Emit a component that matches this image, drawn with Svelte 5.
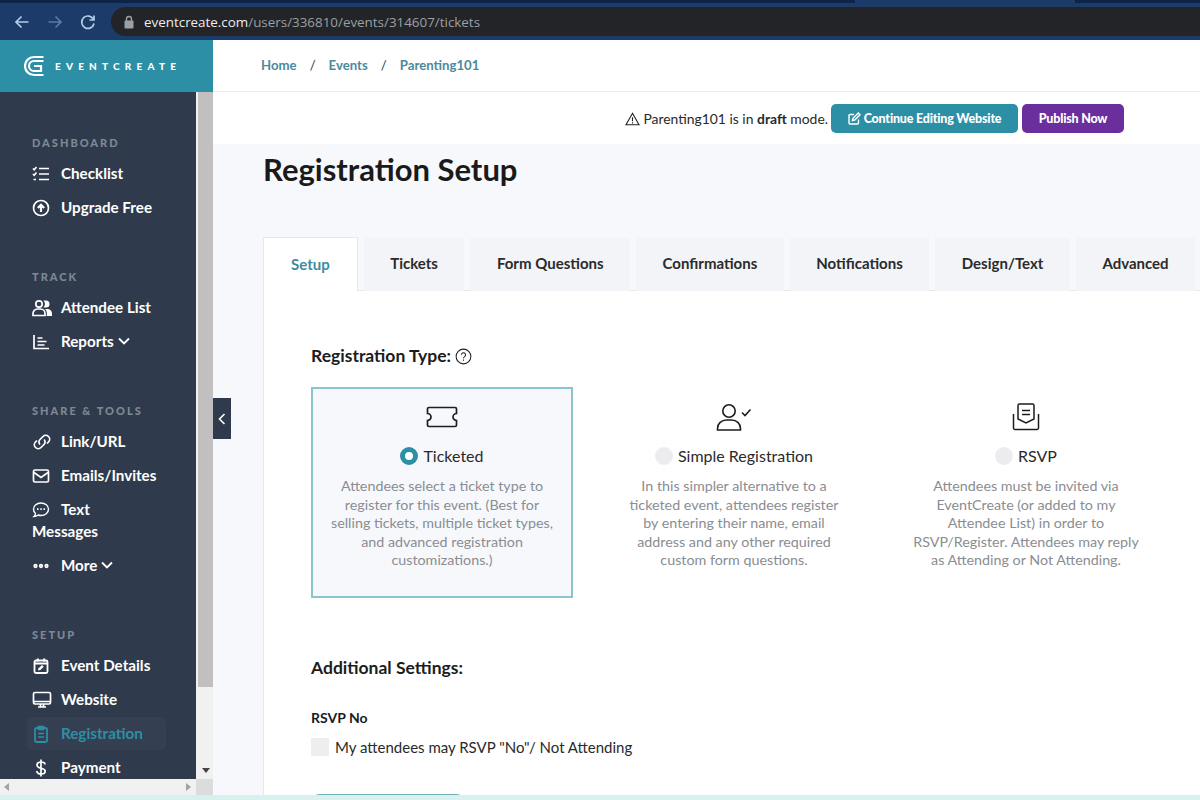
<script>
  const tabs = ['Setup', 'Tickets', 'Form Questions', 'Confirmations', 'Notifications', 'Design/Text', 'Advanced'];
  const options = [
    { name: 'Ticketed', on: true, desc: 'Attendees select a ticket type to register for this event. (Best for selling tickets, multiple ticket types, and advanced registration customizations.)' },
    { name: 'Simple Registration', on: false, desc: 'In this simpler alternative to a ticketed event, attendees register by entering their name, email address and any other required custom form questions.' },
    { name: 'RSVP', on: false, desc: 'Attendees must be invited via EventCreate (or added to my Attendee List) in order to RSVP/Register. Attendees may reply as Attending or Not Attending.' }
  ];
</script>

<div class="page">
  <header class="chrome">
    <div class="tabstrip"></div>
    <div class="toolbar">
      <svg class="nav" width="18" height="18" viewBox="0 0 18 18"><path d="M15.500 9H3M8.500 3.500 3 9l5.500 5.500" /></svg>
      <svg class="nav dim" width="18" height="18" viewBox="0 0 18 18"><path d="M2.500 9H15M9.500 3.500 15 9l-5.500 5.500" /></svg>
      <svg class="nav" width="18" height="18" viewBox="0 0 18 18"><path d="M14.500 6.500A6.200 6.200 0 1 0 15 10.500M15 2.500v4.500h-4.500" /></svg>
      <div class="omnibox">
        <svg width="12" height="14" viewBox="0 0 12 14"><rect x="1.500" y="5.500" width="9" height="8" rx="1" fill="#9aa0a6" /><path d="M3.500 6V4a2.500 2.500 0 0 1 5 0v2" fill="none" stroke="#9aa0a6" stroke-width="1.400" /></svg>
        <span class="url"><b>eventcreate.com</b>/users/336810/events/314607/tickets</span>
      </div>
    </div>
  </header>

  <div class="app">
    <aside class="side">
      <div class="logo">
        <svg width="20" height="22" viewBox="0 0 20 22" fill="none" stroke="#fff" stroke-width="2.200"><path d="M19.500 2H10a9 9 0 0 0 0 18h9.500" /><path d="M19.500 6H10a5 5 0 0 0 0 10h7V11h-7" /></svg>
        <span>EVENTCREATE</span>
      </div>
      <div class="side-body">
        <nav class="menu">
          <div class="sec">DASHBOARD</div>
          <a class="item"><svg viewBox="0 0 18 18"><path d="M7 3.500h10M7 9h10M7 14.500h10M1 3.500l1.200 1.200L4.500 2M1 9l1.200 1.200L4.500 7.500M1.500 14.500h2.500" /></svg>Checklist</a>
          <a class="item"><svg viewBox="0 0 18 18"><circle cx="9" cy="9" r="7.500" /><path d="M9 13V6M5.800 9 9 5.800 12.200 9" stroke-width="2.200" /></svg>Upgrade Free</a>

          <div class="sec gap">TRACK</div>
          <a class="item"><svg class="wide" viewBox="0 0 20 18"><circle cx="7" cy="5" r="3.200" /><path d="M1 16.500v-2A4.500 4.500 0 0 1 5.500 10h3a4.500 4.500 0 0 1 4.500 4.500v2z" /><path class="fill" d="M11.500 1.500h2.500a3.500 3.500 0 0 1 0 7h-2.500a5.500 5.500 0 0 0 0-7zM13 10h2.500a4.500 4.500 0 0 1 4.500 4.500v2.500h-5.500a7 7 0 0 0-1.500-7z" /></svg>Attendee List</a>
          <a class="item"><svg viewBox="0 0 18 18"><path d="M2 2v13.500h15M5.500 5h5M5.500 8.500h9M5.500 12h7" /></svg>Reports<svg class="chev" viewBox="0 0 12 8"><path d="M1 1.500 6 6.500l5-5" /></svg></a>

          <div class="sec gap">SHARE &amp; TOOLS</div>
          <a class="item"><svg class="wide" viewBox="0 0 20 18"><path d="M8 11.500a3.500 3.500 0 0 1 0-5l3-3a3.800 3.800 0 0 1 5.500 5.500l-1.500 1.500" /><path d="M12 6.500a3.500 3.500 0 0 1 0 5l-3 3A3.800 3.800 0 0 1 3.500 9L5 7.500" /></svg>Link/URL</a>
          <a class="item"><svg viewBox="0 0 18 18"><rect x="1.500" y="3" width="15" height="12" rx="1.500" /><path d="m2 5.500 7 5 7-5" /></svg>Emails/Invites</a>
          <a class="item"><svg viewBox="0 0 18 18"><path d="M9 2c4.200 0 7.500 2.700 7.500 6.200S13.200 14.500 9 14.500c-1 0-2-.2-2.800-.5-1 .8-2.500 1.500-4.200 1.500.8-.8 1.500-2 1.500-3A5.800 5.800 0 0 1 1.500 8.200C1.500 4.700 4.800 2 9 2z" stroke-width="1.400" /><path d="M5 8.200h1.500M8.300 8.200h1.500M11.500 8.200H13" /></svg>Text<br />Messages</a>
          <a class="item"><svg viewBox="0 0 18 18"><circle cx="3.500" cy="9" r="1.300" /><circle cx="9" cy="9" r="1.300" /><circle cx="14.500" cy="9" r="1.300" /></svg>More<svg class="chev" viewBox="0 0 12 8"><path d="M1 1.500 6 6.500l5-5" /></svg></a>

          <div class="sec gap">SETUP</div>
          <a class="item"><svg viewBox="0 0 18 18"><rect x="2.500" y="3.500" width="13" height="12.500" rx="1.500" stroke-width="1.800" /><path d="M2.500 6.500h13M5.800 1.500v3M12.200 1.500v3" stroke-width="2" /><path class="fill" d="m6 13.500.5-2.200 3.500-3.300 1.800 1.800-3.500 3.300z" /></svg>Event Details</a>
          <a class="item"><svg class="wide" viewBox="0 0 20 18"><rect x="1.500" y="1.500" width="17" height="11.500" rx="1.500" /><path d="M1.500 10.500h17M6 16h8M8.500 13v3M11.500 13v3" /></svg>Website</a>
          <a class="item current"><svg viewBox="0 0 18 18"><rect x="3" y="3" width="12" height="14" rx="1.500" stroke-width="1.800" /><path d="M6.500 1.500h5v3h-5zM6 8.500h6M6 12h6" stroke-width="1.600" /></svg>Registration</a>
          <a class="item"><svg viewBox="0 0 18 18"><path d="M13 5.500C13 3.800 11.200 3 9 3S5 4 5 6c0 4.500 8.200 2 8.200 6.300C13.200 14.300 11.200 15 9 15s-4.200-1-4.200-3M9 .5v17" /></svg>Payment</a>
        </nav>
        <div class="vbar">
          <div class="thumb"></div>
          <div class="track"><i></i></div>
        </div>
      </div>
      <div class="hbar">
        <div class="hrail"><i class="la"></i><i class="ra"></i></div>
        <div class="corner"></div>
      </div>
    </aside>

    <main class="main">
      <div class="crumbs">
        <a>Home</a><span>/</span><a>Events</a><span>/</span><a>Parenting101</a>
      </div>
      <div class="draft">
        <svg width="15" height="14" viewBox="0 0 15 14" fill="none" stroke="#222" stroke-width="1.100"><path d="M7.500 1.300 14 12.800H1zM7.500 5.200v4M7.500 10.200v1.200" /></svg>
        <span class="dtext">Parenting101 is in <b>draft</b> mode.</span>
        <button class="btn teal"><svg width="13" height="13" viewBox="0 0 13 13" fill="none" stroke="#fff" stroke-width="1.400"><path d="M10.500 7.500V11a1 1 0 0 1-1 1H2a1 1 0 0 1-1-1V3.500a1 1 0 0 1 1-1h4" /><path d="M4.500 8.500 5 6.300 10.300 1l1.700 1.700L6.700 8z" /></svg>Continue Editing Website</button>
        <button class="btn purple">Publish Now</button>
      </div>

      <div class="content">
        <h1>Registration Setup</h1>
        <div class="tabs">
          {#each tabs as t, i}
            <div class="tab" class:active={i === 0}>{t}</div>
          {/each}
        </div>
        <section class="panel">
          <h2>Registration Type: <svg class="help" width="17" height="17" viewBox="0 0 18 18" fill="none" stroke="#222" stroke-width="1.100"><circle cx="9" cy="9" r="7.800" /><path d="M6.800 7.200a2.200 2.200 0 1 1 3.400 1.900c-.8.500-1.200.9-1.200 1.800M9 12.300v1.200" /></svg></h2>
          <div class="cards">
            {#each options as o, i}
              <div class="card" class:on={o.on}>
                <div class="cicon">
                  {#if i === 0}
                    <svg width="32" height="22" viewBox="0 0 32 22" fill="none" stroke="#1d1d1d" stroke-width="1.700"><path d="M3 1.500h26a1.500 1.500 0 0 1 1.500 1.500v4.500a3.500 3.500 0 0 0 0 7V19a1.500 1.500 0 0 1-1.500 1.500H3A1.500 1.500 0 0 1 1.500 19v-4.500a3.500 3.500 0 0 0 0-7V3A1.500 1.500 0 0 1 3 1.500z" /></svg>
                  {:else if i === 1}
                    <svg width="36" height="28" viewBox="0 0 36 28" fill="none" stroke="#1d1d1d" stroke-width="1.600"><circle cx="13" cy="8" r="6.200" /><path d="M1.500 27v-1.500c0-5 4-8.500 9-8.500h5c5 0 9 3.500 9 8.500V27z" /><path d="m26 9.500 3 3 5.500-6" /></svg>
                  {:else}
                    <svg width="28" height="28" viewBox="0 0 28 28" fill="none" stroke="#1d1d1d" stroke-width="1.500"><path d="M6 12V2.500A1.500 1.500 0 0 1 7.500 1h13A1.500 1.500 0 0 1 22 2.500V16l-8 4-8-4zM10 7.500h8M10 11.500h8" /><path d="M1.500 11v14a1.500 1.500 0 0 0 1.500 1.500h22a1.500 1.500 0 0 0 1.500-1.500V11" /></svg>
                  {/if}
                </div>
                <div class="opt"><span class="radio" class:sel={o.on}></span>{o.name}</div>
                <p>{o.desc}</p>
              </div>
            {/each}
          </div>
          <h2 class="more">Additional Settings:</h2>
          <h3>RSVP No</h3>
          <div class="check"><span class="box"></span>My attendees may RSVP "No"/ Not Attending</div>
          <div class="save"></div>
        </section>
      </div>
    </main>

    <button class="toggle" aria-label="Collapse"><svg width="8" height="12" viewBox="0 0 8 12" fill="none" stroke="#fff" stroke-width="1.600"><path d="M6.500 1 1.500 6l5 5" /></svg></button>
  </div>
  <div class="strip"></div>
</div>

<style>
  :global(body) { margin: 0; }
  .page { width: 1200px; height: 800px; overflow: hidden; display: flex; flex-direction: column; font-family: Lato, "Liberation Sans", sans-serif; background: #fff; color: #1c1c1c; }

  .chrome { height: 40px; flex: none; background: #1c3b69; display: flex; flex-direction: column; }
  .tabstrip { height: 3px; background: linear-gradient(90deg, #0d2347 855px, #1c3b69 855px, #1c3b69 1075px, #0d2347 1075px); }
  .toolbar { flex: 1; display: flex; align-items: center; padding-left: 13px; }
  .nav { fill: none; stroke: #b4cbe8; stroke-width: 1.700; margin-right: 15px; flex: none; }
  .nav.dim { stroke: #5c7aa5; }
  .nav:nth-child(3) { margin-right: 0; }
  .omnibox { margin-left: 14px; flex: 1; height: 29px; background: #232427; border-radius: 15px 0 0 15px; display: flex; align-items: center; padding-left: 12px; gap: 9px; }
  .url { font-family: "Open Sans", sans-serif; font-size: 13.400px; color: #9aa0a6; white-space: nowrap; }
  .url b { font-weight: 400; color: #eceef0; }

  .app { flex: 1; min-height: 0; display: flex; position: relative; }
  .side { width: 213px; flex: none; display: flex; flex-direction: column; background: #2f3b4c; }
  .logo { height: 52px; flex: none; background: #2d8fa5; display: flex; align-items: center; padding-left: 24px; gap: 11px; color: #fff; font-size: 10px; font-weight: 900; letter-spacing: 5.200px; }
  .side-body { flex: 1; min-height: 0; display: flex; }
  .menu { width: 196px; flex: none; padding: 43px 0 0 32px; box-sizing: border-box; overflow: hidden; }
  .sec { height: 16px; line-height: 16px; font-size: 11px; font-weight: 900; letter-spacing: 2px; color: #7f8894; margin-bottom: 5px; }
  .sec.gap { margin-top: 45px; }
  .item { display: block; position: relative; isolation: isolate; padding: 6px 0; line-height: 22px; font-size: 15.200px; font-weight: 700; color: #fff; white-space: nowrap; }
  .item svg { width: 18px; height: 18px; margin-right: 11px; vertical-align: -4px; fill: none; stroke: currentColor; stroke-width: 1.700; }
  .item svg.wide { width: 20px; margin-right: 9px; }
  .item svg.chev { width: 12px; height: 8px; margin: 0 0 0 4px; vertical-align: 2px; stroke-width: 1.800; }
  .item svg .fill { fill: currentColor; stroke: none; }
  .current { color: #2f8ea3; }
  .current::before { content: ""; position: absolute; left: -5px; top: 1px; width: 139px; height: 33px; background: #344052; border-radius: 5px; z-index: -1; }

  .vbar { width: 17px; flex: none; display: flex; flex-direction: column; border-left: 2px solid #f1f1f1; box-sizing: border-box; }
  .thumb { height: 595px; flex: none; background: #c1bfbf; }
  .track { flex: 1; background: #f1f1f1; position: relative; }
  .track i { position: absolute; left: 4px; bottom: 6px; border: 4px solid transparent; border-top: 5px solid #444; border-bottom: 0; }

  .hbar { height: 16px; flex: none; display: flex; background: #f1f1f1; }
  .hrail { flex: 1; position: relative; }
  .hrail i { position: absolute; top: 4px; border: 4px solid transparent; }
  .la { left: 4px; border-right: 5px solid #a3a3a3 !important; border-left: 0 !important; }
  .ra { right: 5px; border-left: 5px solid #a3a3a3 !important; border-right: 0 !important; }
  .corner { width: 17px; background: #dcdcdc; }

  .main { flex: 1; min-width: 0; display: flex; flex-direction: column; background: #f7f8fc; overflow: hidden; }
  .crumbs { height: 52px; flex: none; background: #fff; box-sizing: border-box; border-bottom: 1px solid #eee; display: flex; align-items: center; padding: 0 0 2px 48px; font-size: 13.200px; font-weight: 700; color: #4b8a9e; gap: 13px; }
  .crumbs span { color: #333; font-weight: 400; }
  .draft { height: 52px; flex: none; background: #fff; display: flex; align-items: center; justify-content: flex-end; padding: 1px 76px 0 0; box-sizing: border-box; font-size: 13.900px; color: #2a2a2a; }
  .dtext { margin: 0 3px; }
  .btn { height: 29px; border: 0; border-radius: 5px; color: #fff; font: 900 12.500px Lato, sans-serif; letter-spacing: -0.200px; display: flex; align-items: center; justify-content: center; padding: 0; }
  .btn svg { margin-right: 3px; }
  .teal { width: 187px; background: #2d8fa5; margin-right: 4px; }
  .purple { width: 102px; background: #6a2f9d; }

  .content { flex: 1; min-height: 0; padding-left: 50px; }
  h1 { margin: 7px 0 0; height: 36px; line-height: 36px; font-size: 31px; font-weight: 700; color: #1a1a1a; }
  .tabs { display: flex; gap: 6px; margin-top: 50px; height: 54px; align-items: flex-end; position: relative; z-index: 1; white-space: nowrap; }
  .tab { height: 53px; line-height: 51px; padding: 0 26.500px; background: #f2f4f7; font-size: 15px; font-weight: 700; color: #2b2b2b; box-sizing: border-box; }
  .tab.active { height: 54px; background: #fff; color: #3f8ba0; border: 1px solid #e8e8e8; border-bottom: 0; line-height: 53px; padding: 0 27px; }
  .panel { background: #fff; border: 1px solid #e8e8e8; border-right: 0; margin-top: -1px; height: 520px; padding: 0 0 0 47px; box-sizing: border-box; }
  h2 { margin: 54px 0 0; height: 22px; line-height: 22px; font-size: 17.500px; font-weight: 700; display: flex; align-items: center; gap: 4px; color: #1c1c1c; }
  .cards { display: flex; gap: 30px; margin-top: 20px; }
  .card { width: 262px; height: 211px; box-sizing: border-box; border: 2px solid transparent; text-align: center; padding-top: 14px; }
  .card.on { border-color: #8cc4cc; background: #f7f8fc; }
  .cicon { height: 28px; display: flex; align-items: center; justify-content: center; }
  .opt { margin-top: 13px; height: 24px; line-height: 24px; font-size: 16px; color: #2a2a2a; display: flex; align-items: center; justify-content: center; gap: 5px; }
  .radio { width: 18px; height: 18px; border-radius: 50%; background: #ececef; box-sizing: border-box; }
  .radio.sel { background: #fff; border: 5px solid #2d8fa5; }
  p { margin: 9px auto 0; width: 227px; font-size: 14.300px; line-height: 18.500px; color: #8a8d92; }
  .more { margin-top: 59px; }
  h3 { margin: 29px 0 0; font-size: 14px; line-height: 20px; font-weight: 700; color: #1c1c1c; }
  .check { margin-top: 10px; display: flex; align-items: center; gap: 6px; font-size: 15px; line-height: 18px; color: #2a2a2a; }
  .box { width: 18px; height: 18px; background: #eceef0; }
  .save { margin: 38px 0 0 4px; width: 146px; height: 30px; background: #6fb0b8; border-radius: 4px; }

  .toggle { position: absolute; left: 213px; top: 358px; width: 18px; height: 41px; padding: 0; border: 0; background: #2f3b4c; display: flex; align-items: center; justify-content: center; }
  .strip { height: 5px; flex: none; background: #d8f0ee; }
</style>
